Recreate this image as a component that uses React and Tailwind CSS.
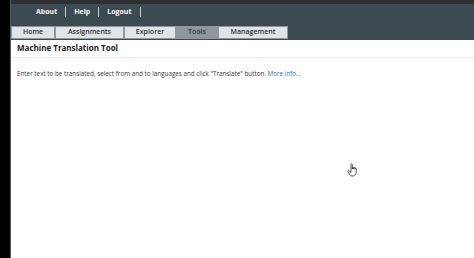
import React from "react";

export default function App() {
  const tabs = [
    { label: "Home", w: "w-[44px]" },
    { label: "Assignments", w: "w-[69px]" },
    { label: "Explorer", w: "w-[52px]" },
    { label: "Tools", w: "w-[42px]", active: true },
    { label: "Management", w: "w-[70px]" },
  ];
  return (
    <div className="flex h-[258px] w-[474px] overflow-hidden bg-white" style={{ fontFamily: "'Open Sans', 'Noto Sans', sans-serif" }}>
      <div className="w-[10px] shrink-0 bg-black" />
      <div className="w-[1px] shrink-0 bg-[#5a5a5a]" />
      <div className="flex flex-1 flex-col">
        <div className="h-[4px] bg-[#2c3033]" />
        <div className="flex h-[36px] flex-col justify-between bg-[#3e4a52]">
          <div className="flex items-center pl-[25px] pt-[3px] text-[7px] font-bold text-white">
            <span>About</span>
            <span className="mx-[8px] h-[10px] w-[1px] bg-[#c9cfd3]" />
            <span>Help</span>
            <span className="mx-[8px] h-[10px] w-[1px] bg-[#c9cfd3]" />
            <span>Logout</span>
            <span className="ml-[8px] h-[10px] w-[1px] bg-[#c9cfd3]" />
          </div>
          <div className="flex pb-[1px]">
            {tabs.map((t) => (
              <div
                key={t.label}
                className={`${t.w} flex h-[13px] items-center justify-center border border-[#8d979d] text-[7px] font-semibold ${t.active ? "bg-[#8e979d] text-[#30373c]" : "bg-[#dfe4e7] text-[#2e3438]"}`}
              >
                {t.label}
              </div>
            ))}
          </div>
        </div>
        <div className="border-b border-[#e4e6e8] px-[6px] pt-[2px] pb-[3px] text-[8px] font-bold text-[#222]">
          Machine Translation Tool
        </div>
        <div className="px-[6px] pt-[11px] text-[6.3px] text-[#3a3a3a]">
          Enter text to be translated, select from and to languages and click "Translate" button.{" "}
          <span className="text-[#3a6fb5]">More info...</span>
        </div>
        <div className="relative flex-1">
          <svg className="absolute left-[336px] top-[85px]" width="12" height="14" viewBox="0 0 12 14">
            <path
              d="M4 1.2 C4 0.5 5.3 0.5 5.3 1.2 L5.3 6 L5.3 4.6 C5.3 3.9 6.6 3.9 6.6 4.6 L6.6 6 L6.6 5 C6.6 4.3 7.9 4.3 7.9 5 L7.9 6.2 L7.9 5.6 C7.9 4.9 9.2 4.9 9.2 5.6 L9.2 9 C9.2 11.5 8 13 6 13 L5 13 C3.6 13 2.9 12 2.2 10.8 L1 8.6 C0.6 7.8 1.6 7.2 2.2 7.9 L4 9.6 Z"
              fill="white"
              stroke="#333"
              strokeWidth="0.8"
              strokeLinejoin="round"
            />
          </svg>
        </div>
      </div>
    </div>
  );
}
